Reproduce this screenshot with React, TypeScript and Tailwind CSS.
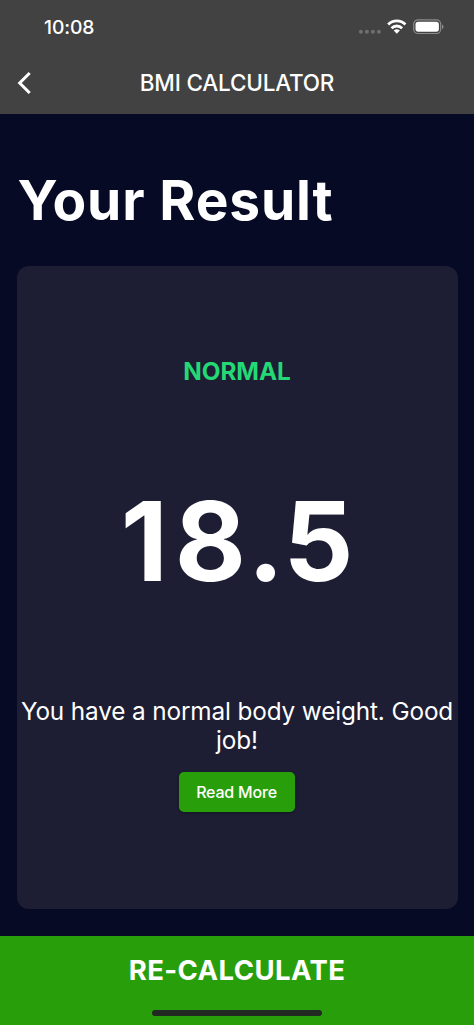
import React from 'react';

function StatusBar() {
  return (
    <div className="flex h-[53px] items-center justify-between pl-[44px] pr-[30px] pt-px">
      <span className="text-[19.3px] font-medium leading-6 tracking-[-0.1px]">10:08</span>
      <div className="flex items-center">
        <svg width="86" height="18" viewBox="0 0 86 18" fill="none">
          <g fill="#6f6f6f">
            <circle cx="2.9" cy="13.7" r="2" />
            <circle cx="8.9" cy="13.7" r="2" />
            <circle cx="14.9" cy="13.7" r="2" />
            <circle cx="20.9" cy="13.7" r="2" />
          </g>
          <g stroke="#fff" strokeWidth="2.8">
            <path d="M30.2 6.6a12 12 0 0 1 17.2 0" />
            <path d="M33.5 10.2a7.5 7.5 0 0 1 10.6 0" />
          </g>
          <path d="M38.8 15.8l-3.1-3.2a4.5 4.5 0 0 1 6.2 0z" fill="#fff" />
          <rect x="55.7" y="1.9" width="27" height="13.6" rx="4.2" stroke="#8b8b8b" strokeWidth="1.2" />
          <rect x="57.5" y="3.7" width="23.4" height="10" rx="2.7" fill="#fff" />
          <path d="M84 6.4c2 .8 2 3.8 0 4.6z" fill="#8b8b8b" />
        </svg>
      </div>
    </div>
  );
}

function Header() {
  return (
    <header className="h-[114px] shrink-0 bg-[#424242]">
      <StatusBar />
      <div className="grid h-[60px] grid-cols-[60px_1fr_60px] items-center">
        <button aria-label="Back" className="pl-[17px]">
          <svg width="16" height="24" viewBox="0 0 16 24" fill="none" stroke="#fff" strokeWidth="3">
            <path d="M12.7 2L2.7 12l10 10" />
          </svg>
        </button>
        <h1 className="text-center text-[22.5px] font-medium leading-7 tracking-[-0.2px]">BMI CALCULATOR</h1>
      </div>
    </header>
  );
}

export default function App() {
  return (
    <div className="flex h-[1025px] w-[474px] flex-col overflow-hidden bg-[#060a24] font-['Inter',sans-serif] text-white">
      <Header />
      <main className="flex flex-1 flex-col px-[16.5px]">
        <h2 className="mt-[52px] whitespace-nowrap pl-px text-[55px] font-bold leading-[68px] tracking-[0.85px]">Your Result</h2>
        <section className="mt-[31.5px] flex h-[643px] flex-col items-center rounded-[12px] bg-[#1d1e33] text-center">
          <p className="mt-[90px] text-[24.3px] font-bold leading-[30px] text-[#24d876]">NORMAL</p>
          <p className="mt-[89px] whitespace-nowrap text-[109.4px] font-bold leading-[132px]">
            <span className="tracking-[7px]">1</span>
            <span className="tracking-[1.5px]">8</span>.5
          </p>
          <p className="mt-[90px] whitespace-nowrap text-[24.3px] leading-[29px] tracking-[-0.12px]">
            You have a normal body weight. Good
            <br />
            job!
          </p>
          <button className="mt-[17.5px] h-[40px] w-[116.5px] rounded-[5px] bg-[#289e0b] pr-px text-[16px] font-medium tracking-[-0.2px] shadow-[0_1px_3px_rgba(0,0,0,0.35)]">
            Read More
          </button>
        </section>
      </main>
      <footer className="flex h-[89px] shrink-0 flex-col items-center bg-[#289e0b]">
        <button className="mt-[16px] text-[27.5px] font-bold leading-9 tracking-[0.4px]">RE-CALCULATE</button>
        <div className="mt-[22px] h-[5.5px] w-[170px] rounded-full bg-[#222922]" />
      </footer>
    </div>
  );
}
